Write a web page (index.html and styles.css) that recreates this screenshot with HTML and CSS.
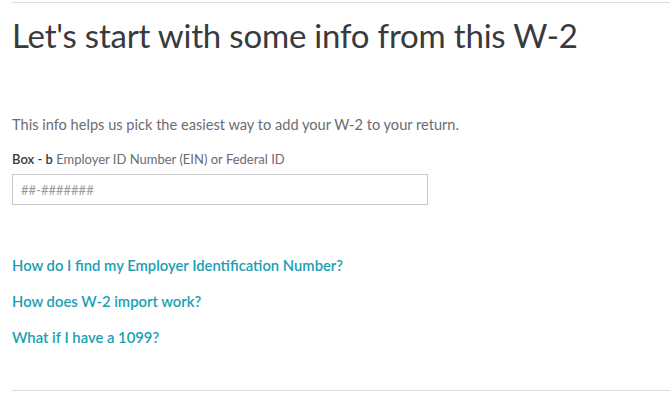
FILE: index.html
```html
<!DOCTYPE html>
<html lang="en">
<head>
<meta charset="utf-8">
<title>W-2 info</title>
<link rel="stylesheet" href="styles.css">
</head>
<body>
<main class="page">
  <hr class="rule rule-top">
  <h1 class="title">Let's start with some info from this W-2</h1>
  <p class="intro">This info helps us pick the easiest way to add your W-2 to your return.</p>
  <div class="field">
    <label class="label" for="ein"><span class="box">Box - b</span> Employer ID Number (EIN) or Federal ID</label>
    <input class="input" id="ein" type="text" placeholder="##-#######">
  </div>
  <ul class="links">
    <li><a class="link" href="#">How do I find my Employer Identification Number?</a></li>
    <li><a class="link" href="#">How does W-2 import work?</a></li>
    <li><a class="link" href="#">What if I have a 1099?</a></li>
  </ul>
  <hr class="rule rule-bottom">
</main>
</body>
</html>
```
FILE: styles.css
```css
* { box-sizing: border-box; }
html, body { margin: 0; padding: 0; background: #fff; }
body {
  font-family: "Lato", "Noto Sans", "Liberation Sans", sans-serif;
  color: #393a3d;
}
.page {
  padding: 2px 0 0 12px;
  width: 670px;
  height: 393px;
  overflow: hidden;
}
.rule {
  border: 0;
  border-top: 1px solid #dcdcdc;
  margin: 0;
  width: 100%;
}
.title {
  margin: 12px 0 0;
  font-size: 33px;
  line-height: 40px;
  font-weight: 400;
  color: #393a3d;
  letter-spacing: -0.2px;
}
.intro {
  margin: 60px 0 0;
  font-size: 14.6px;
  line-height: 20px;
  color: #6b6c72;
}
.field { margin-top: 15px; }
.label {
  display: block;
  font-size: 13px;
  line-height: 18px;
  color: #6b6c72;
}
.box { color: #393a3d; font-weight: 600; }
.input {
  display: block;
  margin-top: 6px;
  width: 416px;
  height: 31px;
  border: 1px solid #c9c9c9;
  padding: 0 8px;
  font-family: inherit;
  font-size: 13px;
  color: #393a3d;
  outline: none;
}
.input::placeholder { color: #9a9ba0; }
.links {
  list-style: none;
  margin: 50px 0 0;
  padding: 0;
  display: flex;
  flex-direction: column;
  gap: 16px;
}
.link {
  display: block;
  font-size: 14.8px;
  line-height: 20px;
  font-weight: 600;
  color: #1aa0b4;
  text-decoration: none;
}
.rule-bottom { margin-top: 43px; }
```
